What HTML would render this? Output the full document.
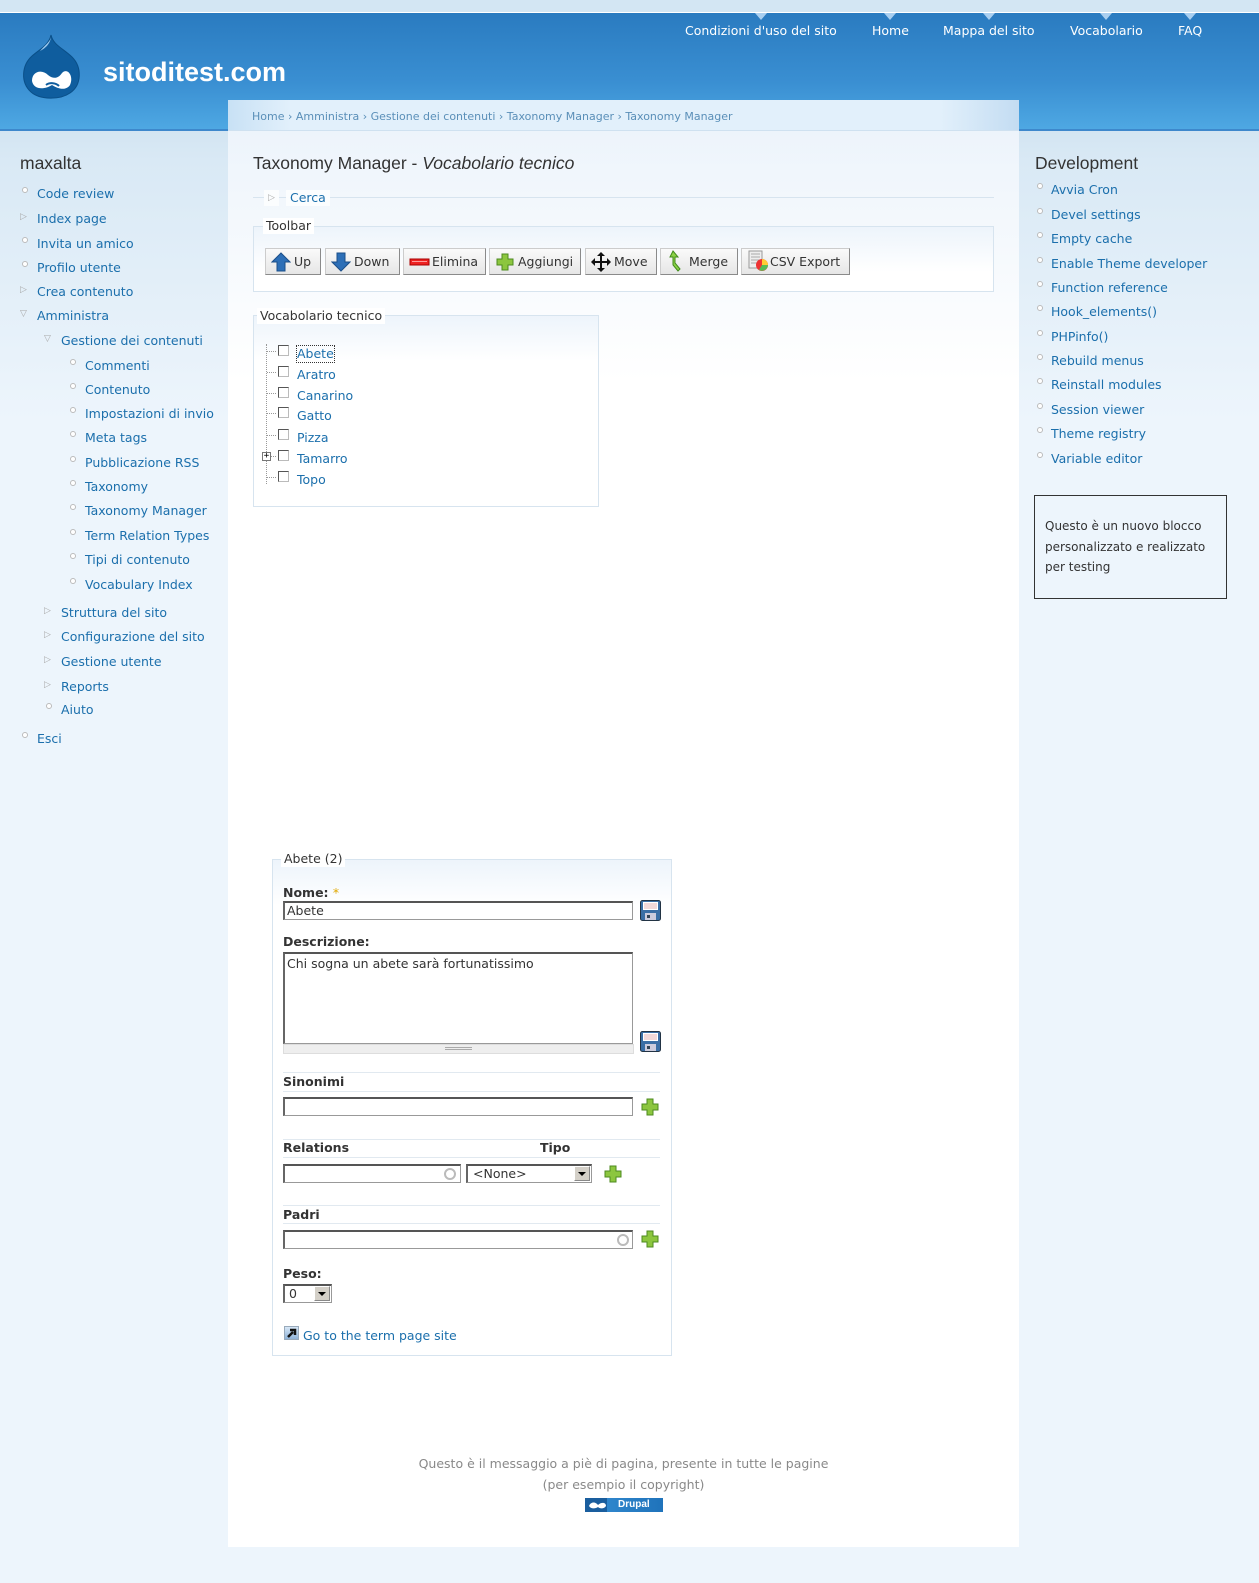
<!DOCTYPE html>
<html><head><meta charset="utf-8">
<style>
*{margin:0;padding:0;box-sizing:border-box}
html,body{width:1259px;height:1583px;overflow:hidden}
body{position:relative;font-family:"DejaVu Sans","Liberation Sans",sans-serif;font-size:12px;color:#333;background:linear-gradient(#d3e5f2 131px,#d9e9f5 160px,#edf5fc 420px,#edf5fc)}
.a{position:absolute;white-space:nowrap;line-height:16px}
a,.l{color:#1b6fac;text-decoration:none}
#top{position:absolute;left:0;top:0;width:1259px;height:13px;background:#d3e6f3;border-bottom:1px solid #fff}
#hdr{position:absolute;left:0;top:13px;width:1259px;height:118px;background:linear-gradient(#2a7bc0,#3a8fd2 60%,#4ea8e3);border-bottom:2px solid #3d88cc}
.nav{position:absolute;top:23px;color:#fff;font-size:12.5px;line-height:16px}
.tri{position:absolute;top:13px;width:0;height:0;border-left:6px solid transparent;border-right:6px solid transparent;border-top:7px solid #a9cff0}
#main{position:absolute;left:228px;top:100px;width:791px;height:1447px;background:#fff}
#bc{position:absolute;left:0;top:0;width:791px;height:31px;background:linear-gradient(90deg,#c8e1f5,#e2f0fb 8%,#e2f0fb 90%,#c3dcf2);border-bottom:1px solid #cfe1f0}
#bgrad{position:absolute;left:0;top:31px;width:791px;height:250px;background:linear-gradient(#edf4fb,#fff)}
.b{position:absolute;height:27px;border:1px solid #8a8a8a;border-top-color:#ccc;border-left-color:#ccc;background:linear-gradient(#fafafa,#e6e6e6);font-size:12.5px;color:#333;line-height:25px;padding-left:28px}
.b svg{position:absolute;left:5px;top:3px}
.fs{position:absolute;border:1px solid #d7e4ef;background:linear-gradient(#edf4fb,#fff 45px)}
.lg{position:absolute;background:#fff;padding:0 3px;font-size:12.5px;line-height:16px;color:#333}
.cb{position:absolute;width:11px;height:11px;border:1px solid #555;border-right-color:#bbb;border-bottom-color:#bbb;background:#fff}
.inp{position:absolute;height:19px;border:1px solid #999;border-top:2px solid #555;border-left:2px solid #666;background:#fff;font-size:12.5px;line-height:15px;padding-left:2px}
.lab{position:absolute;font-weight:bold;font-size:12.5px;line-height:16px;color:#333}
.hr{position:absolute;height:1px;background:#e1e9f0}
.bul{position:absolute;width:6px;height:6px;border:1px solid #bbb;border-radius:50%;background:#fff}
</style></head><body>
<div id="top"></div>
<div id="hdr"></div>
<!-- logo -->
<svg class="a" style="left:20px;top:33px" width="62" height="66" viewBox="0 0 62 66">
<path d="M31 2 C33 12 44 16 52 24 C62 34 62 52 50 60 C40 67 20 67 11 59 C0 49 2 32 12 23 C20 16 29 12 31 2Z" fill="#0f5d9e" stroke="#0a4f88" stroke-width="1"/>
<path d="M20 18 C25 12 30 9 31 4 C30 12 24 16 20 18Z" fill="#9cc9ee"/>
<path d="M12 48 C12 38 22 36 28 42 C33 46 38 46 42 40 C48 34 54 44 50 52 C46 58 38 56 32 52 C26 56 14 58 12 48Z" fill="#fff"/>
<path d="M26 52 C30 49 36 50 39 53" stroke="#0f5d9e" stroke-width="2" fill="none"/>
</svg>
<div class="a" style="left:103px;top:56px;color:#fff;font-family:'Liberation Sans',sans-serif;font-weight:bold;font-size:27px;line-height:32px">sitoditest.com</div>
<!-- nav -->
<div class="tri" style="left:755px"></div><div class="nav" style="left:685px">Condizioni d'uso del sito</div>
<div class="tri" style="left:884px"></div><div class="nav" style="left:872px">Home</div>
<div class="tri" style="left:983px"></div><div class="nav" style="left:943px">Mappa del sito</div>
<div class="tri" style="left:1100px"></div><div class="nav" style="left:1070px">Vocabolario</div>
<div class="tri" style="left:1184px"></div><div class="nav" style="left:1178px">FAQ</div>

<!-- left sidebar -->
<div class="a" style="left:20px;top:152px;font-size:17.5px;line-height:22px;color:#333;font-family:'Liberation Sans',sans-serif">maxalta</div>
<div id="left"></div>

<!-- right sidebar -->
<div class="a" style="left:1035px;top:152px;font-size:17.5px;line-height:22px;color:#333;font-family:'Liberation Sans',sans-serif">Development</div>
<div style="position:absolute;left:1034px;top:495px;width:193px;height:104px;border:1px solid #333;background:#edf5fc"></div>
<div class="a" style="left:1045px;top:516px;line-height:20.5px;white-space:normal;width:175px;color:#333">Questo è un nuovo blocco personalizzato e realizzato per testing</div>

<div id="main">
<div id="bgrad"></div>
<div id="bc"></div>
<div class="a" style="left:24px;top:9px;font-size:11px;color:#5a8fb8">Home › Amministra › Gestione dei contenuti › Taxonomy Manager › Taxonomy Manager</div>
<div class="a" style="left:25px;top:52px;font-size:17.5px;line-height:22px;color:#333;font-family:'Liberation Sans',sans-serif">Taxonomy Manager - <i>Vocabolario tecnico</i></div>
<!-- cerca -->
<div class="hr" style="left:25px;top:97px;width:741px;background:#d7e4ef"></div>
<div class="a" style="left:36px;top:90px;background:#fbfdfe;padding:0 4px;color:#aaa;font-size:9px">▷</div>
<div class="a" style="left:58px;top:90px;background:#fbfdfe;padding:0 4px" ><span class="l" style="font-size:12.5px">Cerca</span></div>
<!-- toolbar fieldset -->
<div class="fs" style="left:25px;top:126px;width:741px;height:66px"></div>
<div class="lg" style="left:35px;top:118px">Toolbar</div>
<div class="b" style="left:37px;top:148px;width:56px"><svg width="20" height="20" viewBox="0 0 20 20"><path d="M10 1 L19 10 H14 V19 H6 V10 H1Z" fill="#2d6fb7" stroke="#1b4f8a"/></svg>Up</div>
<div class="b" style="left:97px;top:148px;width:75px"><svg width="20" height="20" viewBox="0 0 20 20"><path d="M10 19 L19 10 H14 V1 H6 V10 H1Z" fill="#2d6fb7" stroke="#1b4f8a"/></svg>Down</div>
<div class="b" style="left:175px;top:148px;width:83px"><svg width="22" height="20" viewBox="0 0 22 20"><rect x="1" y="7" width="19" height="6" fill="#e22" stroke="#a00"/><rect x="3" y="9" width="15" height="1" fill="#f99"/></svg>Elimina</div>
<div class="b" style="left:261px;top:148px;width:92px"><svg width="20" height="20" viewBox="0 0 20 20"><path d="M7 2H13V7H18V13H13V18H7V13H2V7H7Z" fill="#8cc63f" stroke="#4d8a1f"/></svg>Aggiungi</div>
<div class="b" style="left:357px;top:148px;width:72px"><svg width="20" height="20" viewBox="0 0 20 20"><path d="M10 0L14 4H11V9H16V6L20 10L16 14V11H11V16H14L10 20L6 16H9V11H4V14L0 10L4 6V9H9V4H6Z" fill="#111"/></svg>Move</div>
<div class="b" style="left:432px;top:148px;width:78px;padding-left:28px"><svg width="20" height="22" viewBox="0 0 20 22" style="top:1px"><path d="M7 1L12 7H9V13L14 19L12 21L7 15V7H4Z" fill="#8cd147" stroke="#3f8a1a"/></svg>Merge</div>
<div class="b" style="left:513px;top:148px;width:109px"><svg width="22" height="22" viewBox="0 0 22 22" style="top:1px"><rect x="2" y="1" width="13" height="17" fill="#eee" stroke="#999"/><path d="M4 4h9M4 7h9M4 10h9M4 13h6" stroke="#aaa"/><circle cx="15" cy="15" r="6" fill="#e33"/><path d="M15 15V9A6 6 0 0 1 21 15Z" fill="#fc3"/><path d="M15 15H21A6 6 0 0 1 12 20Z" fill="#5b5"/></svg>CSV Export</div>
<!-- vocab fieldset -->
<div class="fs" style="left:25px;top:215px;width:346px;height:192px"></div>
<div class="lg" style="left:29px;top:208px">Vocabolario tecnico</div>
<div style="position:absolute;left:38px;top:244px;height:140px;border-left:1px dotted #999"></div>
</div>

<!-- tree items -->
<div id="tree"></div>

<!-- term form -->
<div class="fs" style="left:272px;top:859px;width:400px;height:497px"></div>
<div class="lg" style="left:281px;top:851px">Abete (2)</div>
<div class="lab" style="left:283px;top:885px">Nome: <span style="color:#e0a800;font-weight:normal">*</span></div>
<div class="inp" style="left:283px;top:901px;width:350px">Abete</div>
<div class="lab" style="left:283px;top:934px">Descrizione:</div>
<div class="inp" style="left:283px;top:952px;width:350px;height:92px;padding-top:2px">Chi sogna un abete sarà fortunatissimo</div>
<div style="position:absolute;left:283px;top:1044px;width:351px;height:10px;background:#eee;border:1px solid #ddd"><div style="position:absolute;left:161px;top:2px;width:27px;height:3px;border-top:1px solid #aaa;border-bottom:1px solid #aaa"></div></div>
<div class="hr" style="left:283px;top:1072px;width:377px"></div>
<div class="lab" style="left:283px;top:1074px">Sinonimi</div>
<div class="hr" style="left:283px;top:1091px;width:377px"></div>
<div class="inp" style="left:283px;top:1097px;width:350px"></div>
<div class="hr" style="left:283px;top:1139px;width:377px"></div>
<div class="lab" style="left:283px;top:1140px">Relations</div>
<div class="lab" style="left:540px;top:1140px">Tipo</div>
<div class="hr" style="left:283px;top:1157px;width:377px"></div>
<div class="inp" style="left:283px;top:1164px;width:178px"></div>
<div style="position:absolute;left:444px;top:1168px;width:12px;height:12px;border:2px solid #bbb;border-radius:50%"></div>
<div class="inp" style="left:466px;top:1164px;width:126px;padding-left:5px">&lt;None&gt;</div>
<div style="position:absolute;left:574px;top:1166px;width:16px;height:15px;background:#d4d0c8;border:1px solid #888;border-top-color:#fff;border-left-color:#fff"><div style="position:absolute;left:3px;top:5px;border-left:4px solid transparent;border-right:4px solid transparent;border-top:4px solid #000"></div></div>
<div class="hr" style="left:283px;top:1205px;width:377px"></div>
<div class="lab" style="left:283px;top:1207px">Padri</div>
<div class="hr" style="left:283px;top:1223px;width:377px"></div>
<div class="inp" style="left:283px;top:1230px;width:350px"></div>
<div style="position:absolute;left:617px;top:1234px;width:12px;height:12px;border:2px solid #bbb;border-radius:50%"></div>
<div class="lab" style="left:283px;top:1266px">Peso:</div>
<div class="inp" style="left:283px;top:1284px;width:49px;padding-left:4px">0</div>
<div style="position:absolute;left:314px;top:1286px;width:16px;height:15px;background:#d4d0c8;border:1px solid #888;border-top-color:#fff;border-left-color:#fff"><div style="position:absolute;left:3px;top:5px;border-left:4px solid transparent;border-right:4px solid transparent;border-top:4px solid #000"></div></div>
<div style="position:absolute;left:284px;top:1326px;width:15px;height:14px;background:linear-gradient(#d6e6f6,#8fb3d8);border:1px solid #9ab"><svg width="13" height="12" viewBox="0 0 13 12"><path d="M3 10L8 5M5 3H10V8" stroke="#111" stroke-width="2.5" fill="none"/></svg></div>
<div class="a l" style="left:303px;top:1328px;font-size:12.5px">Go to the term page site</div>

<!-- footer -->
<div class="a" style="left:0;width:1247px;text-align:center;top:1453px;color:#898989;font-size:12.5px;line-height:21px">Questo è il messaggio a piè di pagina, presente in tutte le pagine<br>(per esempio il copyright)</div>
<div style="position:absolute;left:585px;top:1498px;width:78px;height:14px;background:linear-gradient(90deg,#1a5e9e 0,#1a5e9e 22px,#2f86cc 22px,#1f73bb);color:#fff;font:bold 10px 'Liberation Sans',sans-serif;line-height:14px;padding-left:33px">Drupal</div>
<svg class="a" style="left:588px;top:1500px" width="20" height="10" viewBox="0 0 20 10"><path d="M1 6C3 1 8 2 10 5C13 2 18 2 18 6C16 9 12 9 10 7C7 9 3 9 1 6Z" fill="#fff"/></svg>

<script>
function bullet(t,x,y){
 if(t==='o')return '<div class="bul" style="left:'+(x-3)+'px;top:'+(y-6)+'px"></div>';
 var ch=t==='r'?'▷':'▽';
 return '<div class="a" style="left:'+(x-5)+'px;top:'+(y-9)+'px;font-size:9px;color:#aaa">'+ch+'</div>';
}
var L=[['o',0,'Code review',195],['r',0,'Index page',220],['o',0,'Invita un amico',245],['o',0,'Profilo utente',269],['r',0,'Crea contenuto',293],['d',0,'Amministra',317],['d',1,'Gestione dei contenuti',342],
['o',2,'Commenti',367],['o',2,'Contenuto',391],['o',2,'Impostazioni di invio',415],['o',2,'Meta tags',439],['o',2,'Pubblicazione RSS',464],['o',2,'Taxonomy',488],['o',2,'Taxonomy Manager',512],['o',2,'Term Relation Types',537],['o',2,'Tipi di contenuto',561],['o',2,'Vocabulary Index',586],
['r',1,'Struttura del sito',614],['r',1,'Configurazione del sito',638],['r',1,'Gestione utente',663],['r',1,'Reports',688],['o',1,'Aiuto',711],['o',0,'Esci',740]];
var h='';
L.forEach(function(i){var x=37+24*i[1];h+=bullet(i[0],x-12,i[3]-2);h+='<div class="a l" style="left:'+x+'px;top:'+(i[3]-9)+'px;font-size:12.5px">'+i[2]+'</div>';});
var R=['Avvia Cron','Devel settings','Empty cache','Enable Theme developer','Function reference','Hook_elements()','PHPinfo()','Rebuild menus','Reinstall modules','Session viewer','Theme registry','Variable editor'];
var ry=[191,216,240,265,289,313,338,362,386,411,435,460];
R.forEach(function(t,k){h+=bullet('o',1040,ry[k]-2);h+='<div class="a l" style="left:1051px;top:'+(ry[k]-9)+'px;font-size:12.5px">'+t+'</div>';});
document.getElementById('left').outerHTML=h;
var T=['Abete','Aratro','Canarino','Gatto','Pizza','Tamarro','Topo'],ty=[354,375,396,416,438,459,480],g='';
T.forEach(function(t,k){var y=ty[k];
 g+='<div style="position:absolute;left:267px;top:'+(y-3)+'px;width:9px;border-top:1px dotted #999"></div>';
 g+='<div class="cb" style="left:278px;top:'+(y-9)+'px"></div>';
 g+='<div class="a l" style="left:297px;top:'+(y-8)+'px;font-size:12.5px'+(k===0?';outline:1px dotted #333':'')+'">'+t+'</div>';
 if(t==='Tamarro')g+='<div style="position:absolute;left:262px;top:'+(y-7)+'px;width:9px;height:9px;border:1px solid #777;background:#fff;font:9px/7px monospace;text-align:center;color:#000">+</div>';
});
document.getElementById('tree').outerHTML=g;
</script>
<!-- save / add icons -->
<svg class="a" style="left:640px;top:900px" width="21" height="21" viewBox="0 0 21 21"><rect x="0.5" y="0.5" width="20" height="20" rx="2" fill="#3a6ea5" stroke="#234"/><rect x="3" y="2" width="15" height="8" fill="#fff"/><path d="M4 4h13M4 6h13M4 8h13" stroke="#c66" stroke-width=".6"/><rect x="5" y="13" width="11" height="7" fill="#ccd"/><rect x="7" y="15" width="3" height="3" fill="#345"/></svg>
<svg class="a" style="left:640px;top:1031px" width="21" height="21" viewBox="0 0 21 21"><rect x="0.5" y="0.5" width="20" height="20" rx="2" fill="#3a6ea5" stroke="#234"/><rect x="3" y="2" width="15" height="8" fill="#fff"/><path d="M4 4h13M4 6h13M4 8h13" stroke="#c66" stroke-width=".6"/><rect x="5" y="13" width="11" height="7" fill="#ccd"/><rect x="7" y="15" width="3" height="3" fill="#345"/></svg>
<svg class="a" style="left:641px;top:1098px" width="18" height="18" viewBox="0 0 18 18"><path d="M6 1H12V6H17V12H12V17H6V12H1V6H6Z" fill="#8cc63f" stroke="#4d8a1f"/></svg>
<svg class="a" style="left:604px;top:1165px" width="18" height="18" viewBox="0 0 18 18"><path d="M6 1H12V6H17V12H12V17H6V12H1V6H6Z" fill="#8cc63f" stroke="#4d8a1f"/></svg>
<svg class="a" style="left:641px;top:1230px" width="18" height="18" viewBox="0 0 18 18"><path d="M6 1H12V6H17V12H12V17H6V12H1V6H6Z" fill="#8cc63f" stroke="#4d8a1f"/></svg>
</body></html>
